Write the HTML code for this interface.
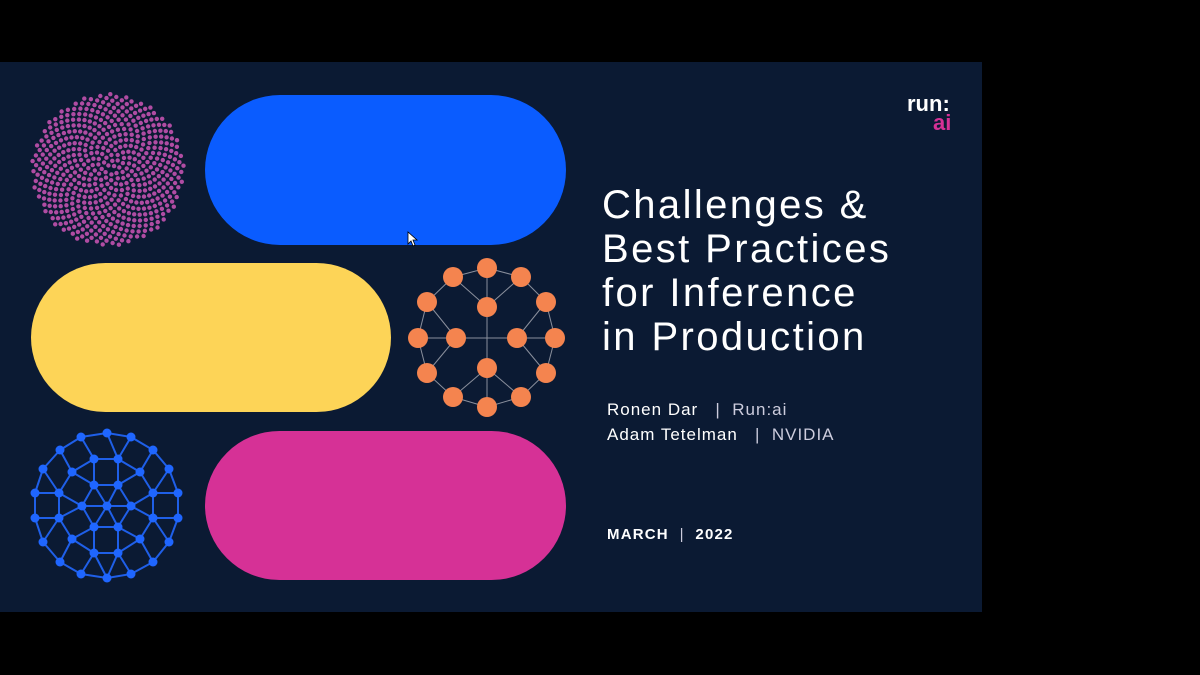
<!DOCTYPE html>
<html><head><meta charset="utf-8"><style>
html,body{margin:0;padding:0;background:#000;width:1200px;height:675px;overflow:hidden}
#slide{position:absolute;left:0;top:62px;width:982px;height:550px;background:#0b1a33}
.pill{position:absolute;border-radius:75px}
.t{position:absolute;color:#fff;font-family:"Liberation Sans",sans-serif;white-space:nowrap}
svg{position:absolute;left:0;top:0}
</style></head><body>
<div id="slide"></div>
<div class="pill" style="left:205px;top:95px;width:361px;height:150px;background:#0a5cff"></div>
<div class="pill" style="left:31px;top:263px;width:360px;height:149px;background:#fdd457"></div>
<div class="pill" style="left:205px;top:431px;width:361px;height:149px;background:#d63196"></div>
<svg id="s" width="1200" height="675"></svg>
<div class="t" style="left:602px;top:183px;font-size:40px;line-height:44px;letter-spacing:2.4px">Challenges &amp;<br>Best Practices<br>for Inference<br>in Production</div>
<div class="t" style="left:607px;top:397px;font-size:17px;line-height:25px;letter-spacing:1px">Ronen Dar &nbsp;&nbsp;<span style="color:#ccd">|&nbsp; Run:ai</span><br>Adam Tetelman &nbsp;&nbsp;<span style="color:#ccd">|&nbsp; NVIDIA</span></div>
<div class="t" style="left:607px;top:526px;font-size:15px;font-weight:bold;letter-spacing:1.2px">MARCH <span style="font-weight:normal;color:#ccd">&nbsp;|&nbsp;</span> 2022</div>
<div class="t" style="left:907px;top:94px;font-size:22px;font-weight:bold;line-height:19px">run:<br><span style="color:#d63196;padding-left:26px">ai</span></div>
<script>
var s=document.getElementById('s'),h='';
var N=560,cx=108,cy=170,R=76;
for(var i=1;i<=N;i++){var r=R*Math.sqrt(i/N),a=i*2.39996;h+='<circle cx="'+(cx+r*Math.cos(a)).toFixed(1)+'" cy="'+(cy+r*Math.sin(a)).toFixed(1)+'" r="2.2" fill="#b04ca3"/>';}
var O=[[487,268],[521,277],[546,302],[555,338],[546,373],[521,397],[487,407],[453,397],[427,373],[418,338],[427,302],[453,277]];
var I=[[487,307],[517,338],[487,368],[456,338]];
var L='';
for(var k=0;k<12;k++){var p=O[k],q=O[(k+1)%12];L+='M'+p+'L'+q;}
L+='M487,268L487,407M418,338L555,338';
var con=[[0,11],[0,1],[1,2],[1,4],[2,5],[2,7],[3,10],[3,8]];
con.forEach(function(c){var p=I[c[0]],q=O[c[1]];L+='M'+p+'L'+q;});
h+='<path d="'+L+'" stroke="#8a8f9c" stroke-width="1" fill="none"/>';
O.concat(I).forEach(function(p){h+='<circle cx="'+p[0]+'" cy="'+p[1]+'" r="10" fill="#f4844f"/>';});
var B=[[82,506],[131,506],[94,485],[118,485],[94,527],[118,527],[72,472],[140,472],[59,493],[153,493],[59,518],[153,518],[72,539],[140,539],[94,459],[118,459],[94,553],[118,553],[107,433],[81,437],[131,437],[60,450],[153,450],[43,469],[169,469],[35,493],[178,493],[35,518],[178,518],[43,542],[169,542],[60,562],[153,562],[81,574],[131,574],[107,578],[107,506]];
var BL='';
for(var a=0;a<B.length;a++)for(var b=a+1;b<B.length;b++){var dx=B[a][0]-B[b][0],dy=B[a][1]-B[b][1];var d=Math.sqrt(dx*dx+dy*dy);if(d<29)BL+='M'+B[a]+'L'+B[b];}
h+='<path d="'+BL+'" stroke="#1f5fe8" stroke-width="2" fill="none"/>';
B.forEach(function(p){h+='<circle cx="'+p[0]+'" cy="'+p[1]+'" r="4.5" fill="#1f66ff"/>';});
h+='<path d="M408,232L408,244L411,241L413,246L415,245L413,240L417,240Z" fill="#fff" stroke="#000" stroke-width="0.8"/>';
s.innerHTML=h;
</script>
</body></html>
